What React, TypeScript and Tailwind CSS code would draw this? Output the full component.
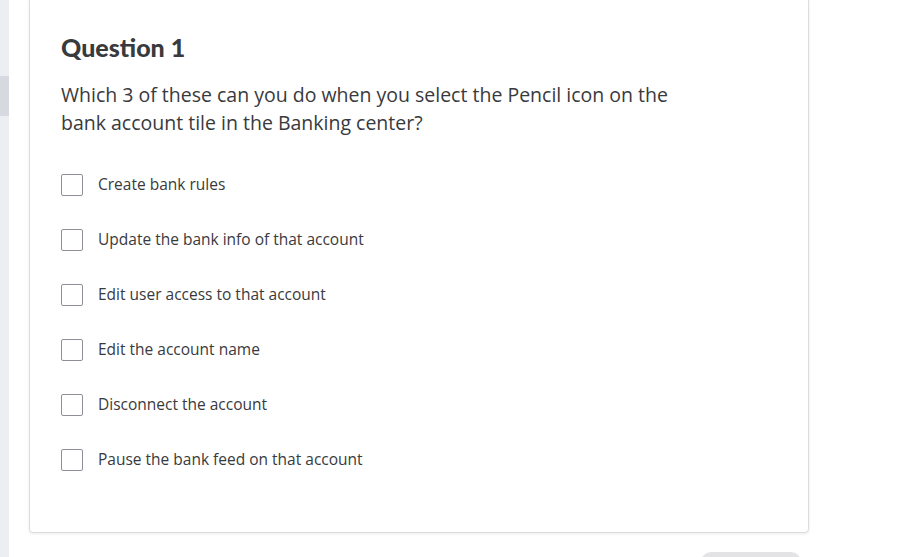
const options = [
  "Create bank rules",
  "Update the bank info of that account",
  "Edit user access to that account",
  "Edit the account name",
  "Disconnect the account",
  "Pause the bank feed on that account",
];

export default function App() {
  return (
    <div
      className="flex w-[918px] h-[557px] overflow-hidden bg-white text-[#393a3d]"
      style={{ fontFamily: "'Open Sans', Lato, sans-serif" }}
    >
      {/* left rail */}
      <div className="w-[9px] shrink-0 bg-[#eceef1] flex flex-col">
        <div className="h-[76px]" />
        <div className="h-[40px] bg-[#d6d9e0]" />
      </div>

      <div className="flex flex-col pl-[20px]">
        <div className="shrink-0 w-[780px] h-[534px] -mt-px bg-white border border-[#dcdcdf] rounded-b-[4px] shadow-[0_1px_3px_rgba(0,0,0,0.08)] pl-[31px] pt-[31px]">
          <h2
            className="text-[25px] leading-[32px] font-black text-[#393a3d]"
            style={{ fontFamily: "Lato, sans-serif" }}
          >
            Question 1
          </h2>
          <p className="mt-[18px] text-[19.5px] leading-[28px] text-[#393a3d] w-[640px]">
            Which 3 of these can you do when you select the Pencil icon on the bank account tile in the Banking center?
          </p>
          <div className="mt-[37px] flex flex-col gap-[33px]">
            {options.map((o) => (
              <label key={o} className="flex items-center h-[22px]">
                <span className="w-[22px] h-[22px] border border-[#8d9096] rounded-[2px] bg-white shrink-0" />
                <span className="ml-[15px] text-[15.5px] text-[#393a3d]">{o}</span>
              </label>
            ))}
          </div>
        </div>
        <div className="flex justify-end mt-[19px] pr-[8px]">
          <div className="w-[100px] h-[20px] rounded-full bg-[#e3e3e6]" />
        </div>
      </div>
    </div>
  );
}
